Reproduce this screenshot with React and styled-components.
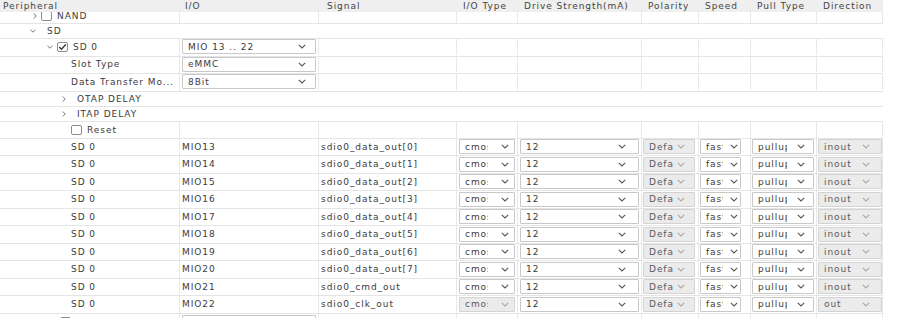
import React from 'react';
import styled, { createGlobalStyle } from 'styled-components';

const COLS = '180px 139px 138px 61px 124px 57px 52px 66px 66px';

const GlobalStyle = createGlobalStyle`
  html, body {
    margin: 0;
    padding: 0;
    background: #fff;
  }
  body {
    font-family: "DejaVu Sans", "Liberation Sans", sans-serif;
    font-size: 9px;
    letter-spacing: 0.95px;
    color: #3b3b3b;
  }
`;

const Table = styled.div`
  width: 883px;
  height: 318px;
  display: flex;
  flex-direction: column;
  overflow: hidden;
`;

const HeaderRow = styled.div`
  display: grid;
  grid-template-columns: ${COLS};
  height: 12px;
  flex: none;
  background: #efefef;
  position: relative;
  z-index: 1;
`;

const HeadCell = styled.div`
  padding-left: ${p => p.$pad || 6}px;
  line-height: 12px;
  white-space: nowrap;
  overflow: hidden;
  color: #444;
`;

const Viewport = styled.div`
  flex: 1;
  overflow: hidden;
`;

const Body = styled.div`
  margin-top: -3px;
`;

const Row = styled.div`
  display: grid;
  grid-template-columns: ${COLS};
  height: ${p => p.$h}px;
  box-sizing: border-box;
  border-bottom: 1px solid #e5e5e5;
`;

const GroupRow = styled.div`
  display: flex;
  align-items: center;
  height: ${p => p.$h}px;
  box-sizing: border-box;
  padding-left: ${p => p.$indent}px;
  border-bottom: 1px solid #e5e5e5;
`;

const Cell = styled.div`
  display: flex;
  align-items: center;
  min-width: 0;
  overflow: hidden;
  white-space: nowrap;
  padding: 0 ${p => (p.$pad === undefined ? 2 : p.$pad)}px;
  border-right: 1px solid #e8e8e8;
`;

const TreeCell = styled(Cell)`
  padding-left: ${p => p.$indent}px;
`;

const Toggle = styled.span`
  display: inline-flex;
  justify-content: center;
  align-items: center;
  width: 8px;
  height: 8px;
  margin-right: ${p => p.$gap}px;
  flex: none;
`;

const Box = styled.span`
  display: inline-flex;
  align-items: center;
  justify-content: center;
  width: 11px;
  height: 10px;
  box-sizing: border-box;
  border: 1px solid #8c8c8c;
  border-radius: 2px;
  background: #fff;
  margin-right: 5px;
  flex: none;
`;

const Label = styled.span`
  white-space: nowrap;
`;

const Combo = styled.div`
  display: flex;
  align-items: center;
  height: 15px;
  width: ${p => (p.$w ? `${p.$w}px` : '100%')};
  box-sizing: border-box;
  border: 1px solid ${p => (p.$off ? '#d3d3d3' : '#c8c8c8')};
  border-radius: 1px;
  background: ${p => (p.$off ? '#ebebeb' : '#fff')};
  color: ${p => (p.$off ? '#5a5a5a' : '#3b3b3b')};
  padding-left: 5px;
  flex: none;
`;

const ComboText = styled.span`
  overflow: hidden;
  white-space: nowrap;
  max-width: ${p => (p.$clip ? `${p.$clip}px` : 'none')};
`;

const Arrow = styled.span`
  display: inline-flex;
  margin-left: auto;
  margin-right: ${p => p.$pad}px;
`;

const Chevron = ({ off }) => (
  <svg width="8" height="5" viewBox="0 0 8 5">
    <polyline points="0.8,0.8 4,4 7.2,0.8" fill="none" stroke={off ? '#a8a8a8' : '#555'} strokeWidth="1.1" />
  </svg>
);

const TreeArrow = ({ open }) => (
  <svg width="6" height="6" viewBox="0 0 6 6">
    {open
      ? <polyline points="0.5,1.8 3,4.2 5.5,1.8" fill="none" stroke="#777" strokeWidth="1" />
      : <polyline points="1.8,0.5 4.2,3 1.8,5.5" fill="none" stroke="#777" strokeWidth="1" />}
  </svg>
);

const Check = ({ checked }) => (
  <Box>
    {checked && (
      <svg width="9" height="8" viewBox="0 0 9 8">
        <polyline points="1.2,4 3.5,6.2 7.8,1.5" fill="none" stroke="#3a3a3a" strokeWidth="1.4" />
      </svg>
    )}
  </Box>
);

const Select = ({ value, off, w, clip, pad = 9 }) => (
  <Combo $off={off} $w={w}>
    <ComboText $clip={clip}>{value}</ComboText>
    <Arrow $pad={pad}><Chevron off={off} /></Arrow>
  </Combo>
);

const Empty = () => (
  <>
    <Cell /><Cell /><Cell /><Cell /><Cell /><Cell /><Cell /><Cell />
  </>
);

const headers = ['I/O', 'Signal', 'I/O Type', 'Drive Strength(mA)', 'Polarity', 'Speed', 'Pull Type', 'Direction'];

const signals = [
  'sdio0_data_out[0]', 'sdio0_data_out[1]', 'sdio0_data_out[2]', 'sdio0_data_out[3]',
  'sdio0_data_out[4]', 'sdio0_data_out[5]', 'sdio0_data_out[6]', 'sdio0_data_out[7]',
  'sdio0_cmd_out', 'sdio0_clk_out',
];

const App = () => {
  return (
    <Table>
      <GlobalStyle />
      <HeaderRow>
        <HeadCell $pad={3}>Peripheral</HeadCell>
        {headers.map((h, i) => (
          <HeadCell key={h} $pad={i === 0 ? 5 : i === 1 ? 8 : 6}>{h}</HeadCell>
        ))}
      </HeaderRow>
      <Viewport>
        <Body>
          <Row $h={15}>
            <TreeCell $indent={31}>
              <Toggle $gap={2}><TreeArrow /></Toggle>
              <Check />
              <Label>NAND</Label>
            </TreeCell>
            <Empty />
          </Row>
          <GroupRow $h={15} $indent={29}>
            <Toggle $gap={10}><TreeArrow open /></Toggle>
            <Label>SD</Label>
          </GroupRow>
          <Row $h={17.5}>
            <TreeCell $indent={46}>
              <Toggle $gap={3}><TreeArrow open /></Toggle>
              <Check checked />
              <Label>SD 0</Label>
            </TreeCell>
            <Cell><Select value="MIO 13 .. 22" pad={9} /></Cell>
            <Empty />
          </Row>
          <Row $h={17.5}>
            <TreeCell $indent={71}><Label>Slot Type</Label></TreeCell>
            <Cell><Select value="eMMC" pad={9} /></Cell>
            <Empty />
          </Row>
          <Row $h={17.5}>
            <TreeCell $indent={71} $pad={0}><Label>Data Transfer Mo...</Label></TreeCell>
            <Cell><Select value="8Bit" pad={9} /></Cell>
            <Empty />
          </Row>
          <GroupRow $h={15} $indent={60}>
            <Toggle $gap={9}><TreeArrow /></Toggle>
            <Label>OTAP DELAY</Label>
          </GroupRow>
          <GroupRow $h={15} $indent={60}>
            <Toggle $gap={9}><TreeArrow /></Toggle>
            <Label>ITAP DELAY</Label>
          </GroupRow>
          <Row $h={17}>
            <TreeCell $indent={71}>
              <Check />
              <Label>Reset</Label>
            </TreeCell>
            <Empty />
          </Row>
          {signals.map((s, i) => (
            <Row key={s} $h={17.5}>
              <TreeCell $indent={71}><Label>SD 0</Label></TreeCell>
              <Cell><Label>MIO{13 + i}</Label></Cell>
              <Cell><Label>{s}</Label></Cell>
              <Cell><Select value="cmos" clip={23} pad={5} off={i === 9} /></Cell>
              <Cell><Select value="12" pad={12} /></Cell>
              <Cell $pad={1}><Select value="Default" clip={25} pad={9} off w={52} /></Cell>
              <Cell $pad={1}><Select value="fast" clip={17} pad={2} w={41} /></Cell>
              <Cell $pad={1}><Select value="pullup" clip={29} pad={8} w={62} /></Cell>
              <Cell $pad={1}><Select value={i === 9 ? 'out' : 'inout'} pad={11} off w={64} /></Cell>
            </Row>
          ))}
          <Row $h={21}>
            <TreeCell $indent={60}>
              <Check />
              <Label>CD</Label>
            </TreeCell>
            <Cell><Select value="MIO 45" pad={9} /></Cell>
            <Empty />
          </Row>
        </Body>
      </Viewport>
    </Table>
  );
};

export default App;
